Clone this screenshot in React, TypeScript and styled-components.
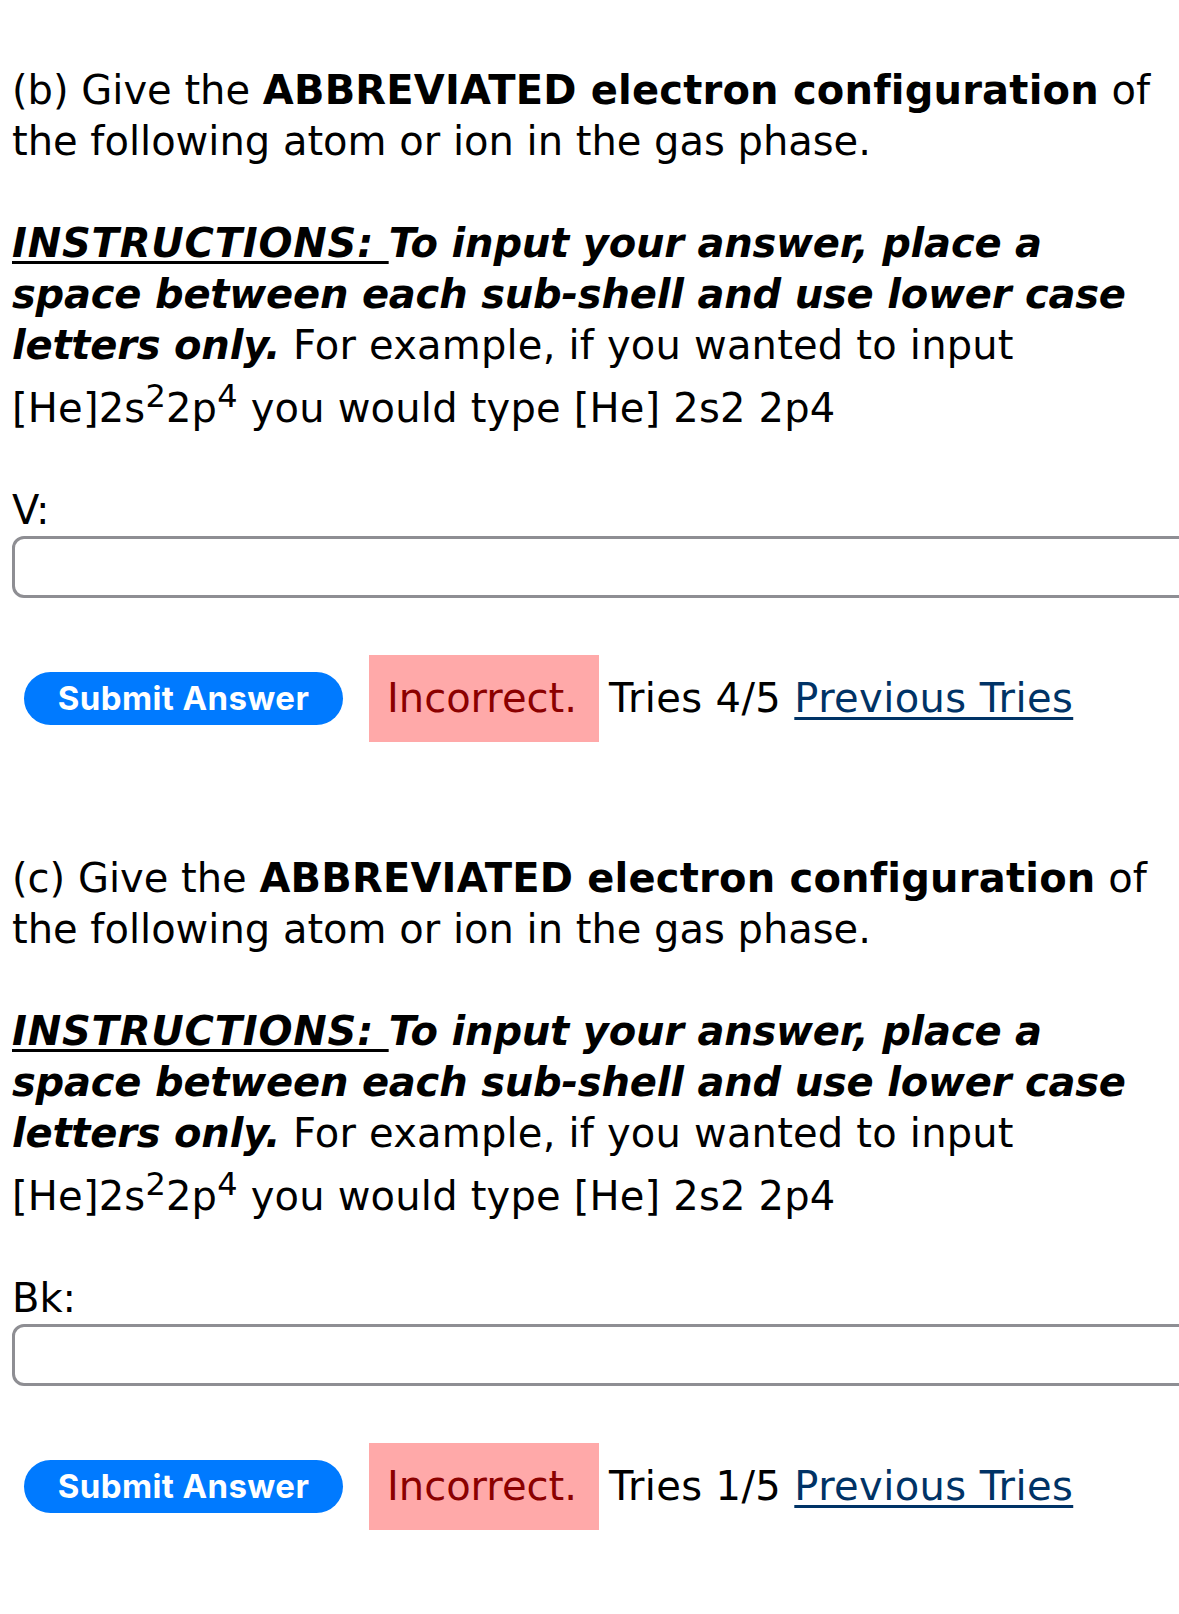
import React from "react";
import styled, { createGlobalStyle } from "styled-components";

const GlobalStyle = createGlobalStyle`
  html, body {
    margin: 0;
    padding: 0;
    background: #ffffff;
    overflow-x: hidden;
  }
  body {
    font-family: "DejaVu Sans", Verdana, sans-serif;
    font-size: 40px;
    line-height: 51px;
    color: #000000;
  }
`;

const Page = styled.main`
  width: 1150px;
  padding: 65px 0 0 12px;
  display: flex;
  flex-direction: column;
`;

const Question = styled.section`
  display: flex;
  flex-direction: column;
  & + & {
    margin-top: 111px;
  }
`;

const Prompt = styled.p`
  margin: 0 0 51px 0;
`;

const Strong = styled.b`
  font-weight: 700;
  letter-spacing: 0.2px;
`;

const Instruction = styled.b`
  font-weight: 700;
  font-style: italic;
  letter-spacing: -0.2px;
`;

const Underline = styled.u`
  letter-spacing: 0.8px;
  text-decoration: underline;
  text-decoration-thickness: 3px;
  text-underline-offset: 4px;
`;

const Example = styled.span`
  letter-spacing: 0.2px;
`;

const Sup = styled.sup`
  font-size: 32px;
  line-height: 51px;
  vertical-align: 15px;
`;

const Label = styled.label`
  display: block;
`;

const AnswerInput = styled.input`
  display: block;
  box-sizing: border-box;
  width: 1240px;
  height: 62px;
  margin: 0;
  border: 3px solid #8e8e93;
  border-radius: 12px;
  background: #ffffff;
  font: inherit;
  padding: 0 12px;
  outline: none;
`;

const ActionRow = styled.div`
  display: flex;
  align-items: center;
  margin-top: 57px;
`;

const SubmitButton = styled.button`
  box-sizing: border-box;
  margin-left: 12px;
  width: 319px;
  height: 53px;
  border: none;
  border-radius: 27px;
  background: #007aff;
  color: #ffffff;
  font-family: Inter, "Open Sans", sans-serif;
  font-weight: 700;
  font-size: 33px;
  letter-spacing: 0.4px;
  line-height: 53px;
  padding: 0;
`;

const Status = styled.span`
  margin-left: 26px;
  background: #ffa9a9;
  color: #8b0000;
  padding: 18px 22px 18px 18px;
  line-height: 51px;
`;

const Tries = styled.span`
  margin-left: 10px;
  white-space: nowrap;
  letter-spacing: 0.4px;
`;

const TriesLink = styled.a`
  color: #003366;
  text-decoration: underline;
  text-decoration-thickness: 3px;
  text-underline-offset: 5px;
`;

type Q = { letter: string; element: string; tries: string };

const questions: Q[] = [
  { letter: "b", element: "V", tries: "4/5" },
  { letter: "c", element: "Bk", tries: "1/5" },
];

function QuestionBlock({ q }: { q: Q }) {
  const id = `answer-${q.letter}`;
  return (
    <Question>
      <Prompt>
        ({q.letter}) Give the <Strong>ABBREVIATED electron configuration</Strong> of the
        following atom or ion in the gas phase.
      </Prompt>
      <Prompt>
        <Instruction>
          <Underline>INSTRUCTIONS: </Underline>To input your answer, place a space between each
          sub-shell and use lower case letters only.
        </Instruction>{" "}
        <Example>
          For example, if you wanted to input [He]2s<Sup>2</Sup>2p<Sup>4</Sup> you would type
          [He] 2s2 2p4
        </Example>
      </Prompt>
      <Label htmlFor={id}>{q.element}:</Label>
      <AnswerInput id={id} type="text" />
      <ActionRow>
        <SubmitButton type="button">Submit Answer</SubmitButton>
        <Status>Incorrect.</Status>
        <Tries>
          Tries {q.tries} <TriesLink href="#">Previous Tries</TriesLink>
        </Tries>
      </ActionRow>
    </Question>
  );
}

export default function App() {
  return (
    <>
      <GlobalStyle />
      <Page>
        {questions.map((q) => (
          <QuestionBlock key={q.letter} q={q} />
        ))}
      </Page>
    </>
  );
}
